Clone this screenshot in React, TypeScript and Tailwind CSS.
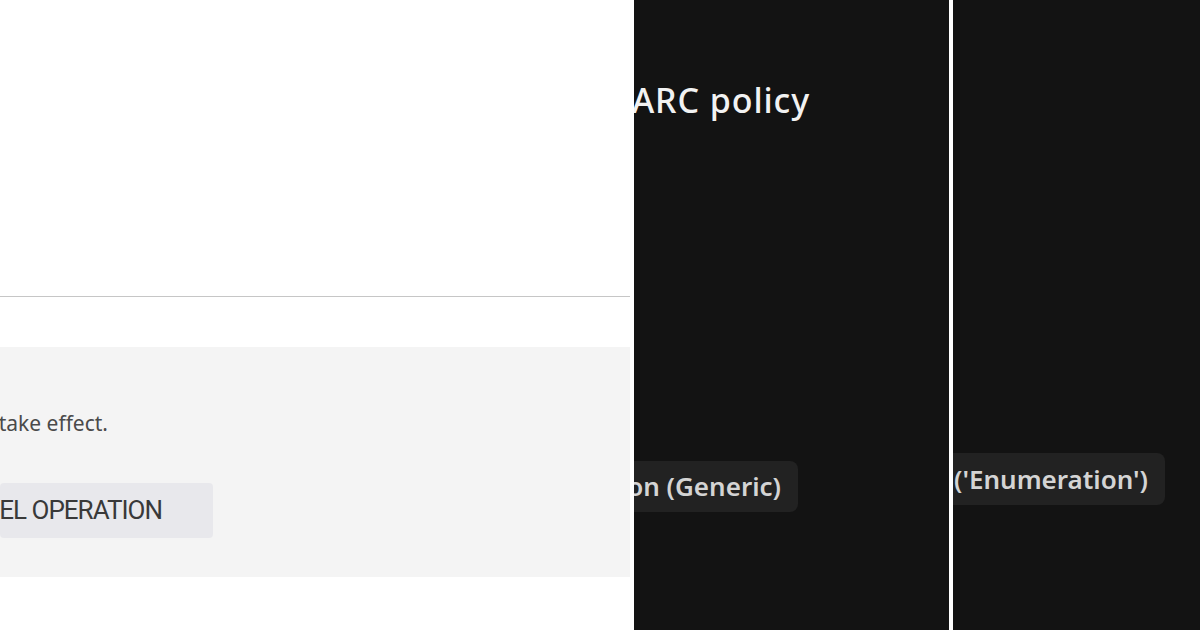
export default function App() {
  return (
    <div className="flex w-[1200px] h-[630px] bg-white overflow-hidden">
      {/* Left: settings page */}
      <div className="w-[634px] shrink-0 h-full bg-white overflow-hidden flex flex-col pt-[296px]">
        <div className="w-[630px] border-t border-[#c6c6c6]" />
        <div className="mt-[50px] w-[630px] h-[230px] bg-[#f4f4f4] flex flex-col">
          <div className="mt-[64px] h-[26px] w-[108px] flex justify-end items-center whitespace-nowrap font-['Noto_Sans',sans-serif] text-[21px] text-[#4a4a4a]">
            Changes may take a few minutes to take effect.
          </div>
          <button className="mt-[46px] w-[213px] h-[55px] flex justify-end items-center pr-[51px] bg-[#e8e8ec] rounded-[4px] whitespace-nowrap font-['Roboto',sans-serif] text-[26px] tracking-[-1px] text-[#393939]">
            CANCEL OPERATION
          </button>
        </div>
      </div>

      {/* Middle: dark card */}
      <div className="w-[315px] shrink-0 h-full bg-[#131313] overflow-hidden flex flex-col">
        <div className="mt-[78px] w-[176px] h-[44px] flex justify-end items-center whitespace-nowrap font-['Noto_Sans',sans-serif] font-medium text-[34px] tracking-[0.9px] text-[#f2f2f2]">
          DMARC policy
        </div>
        <div className="mt-[339px] flex justify-end pr-[151px]">
          <div className="shrink-0 h-[51px] flex items-center px-[17px] rounded-[8px] bg-[#222222] whitespace-nowrap font-['Noto_Sans',sans-serif] font-semibold text-[26px] text-[#d4d4d4]">
            Enumeration (Generic)
          </div>
        </div>
      </div>

      <div className="w-[4px] shrink-0 h-full bg-white" />

      {/* Right: dark card */}
      <div className="flex-1 h-full bg-[#131313] overflow-hidden flex flex-col">
        <div className="mt-[453px] flex justify-end pr-[35px]">
          <div className="shrink-0 h-[52px] flex items-center px-[17px] rounded-[8px] bg-[#222222] whitespace-nowrap font-['Noto_Sans',sans-serif] font-semibold text-[26px] text-[#d4d4d4]">
            Type ('Enumeration')
          </div>
        </div>
      </div>
    </div>
  );
}
